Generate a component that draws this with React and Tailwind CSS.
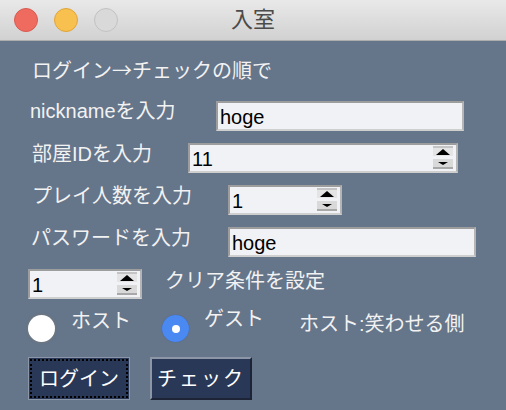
import React from "react";

const font = { fontFamily: '"Liberation Sans", "Noto Sans CJK JP", sans-serif' };
const cjk = { fontFamily: '"Noto Sans CJK JP", sans-serif' };

function Arrows() {
  return (
    <div className="absolute right-[3px] top-[1px] flex flex-col w-[20px]">
      <div className="h-[10px] bg-[#e4e4e4] border-t-2 border-[#c4c4c4] flex items-center justify-center">
        <svg width="14" height="6" viewBox="0 0 14 6"><polygon points="7,0 14,6 0,6" fill="#000" /></svg>
      </div>
      <div className="h-[3px]" />
      <div className="h-[10px] bg-[#d9d9d9] border-b-2 border-[#a8a8a8] flex items-center justify-center">
        <svg width="10" height="3" viewBox="0 0 10 3"><polygon points="0,0 10,0 5,3" fill="#000" /></svg>
      </div>
    </div>
  );
}

function Entry({ value, w, spin }) {
  return (
    <div
      className="relative h-[30px] shrink-0 bg-[#f1f2f6] border-2 border-t-[#9d9d9d] border-l-[#9d9d9d] border-r-[#b5b5b5] border-b-[#cfcfcf] flex items-center pl-[2px] text-[20px] text-black leading-none"
      style={{ width: w }}
    >
      <span className="pt-[1px]">{value}</span>
      {spin && <Arrows />}
    </div>
  );
}

function Label({ children, className = "" }) {
  return <div className={"text-[20px] leading-[24px] text-[#f2f2f2] whitespace-nowrap " + className}>{children}</div>;
}

export default function App() {
  return (
    <div className="w-[506px] h-[410px] bg-[#65758a] overflow-hidden" style={font}>
      {/* title bar */}
      <div className="relative h-[41px] bg-gradient-to-b from-[#e9e9e9] to-[#d1d1d1] border-b border-[#adadad] flex items-center justify-center">
        <div className="absolute left-[14px] top-[8px] flex gap-[16px]">
          <div className="w-[24px] h-[24px] rounded-full bg-[#ef6b60] border border-[#d85a50]" />
          <div className="w-[24px] h-[24px] rounded-full bg-[#f7c04f] border border-[#dfa63a]" />
          <div className="w-[24px] h-[24px] rounded-full bg-[#d9d9d9] border border-[#c2c2c2]" />
        </div>
        <div className="text-[22px] text-[#4b4b4b] leading-none">入室</div>
      </div>

      {/* line 1 */}
      <div className="mt-[17px] pl-[32px]">
        <Label>
          ログイン<span style={cjk}>→</span>チェックの順で
        </Label>
      </div>

      {/* nickname */}
      <div className="mt-[18px] flex items-start pl-[30px]">
        <Label className="w-[186px] -mt-[2px]">nicknameを入力</Label>
        <Entry value="hoge" w={248} />
      </div>

      {/* room id */}
      <div className="mt-[12px] flex items-start pl-[32px]">
        <Label className="w-[156px] -mt-[1px]">部屋IDを入力</Label>
        <Entry value="11" w={270} spin />
      </div>

      {/* players */}
      <div className="mt-[12px] flex items-start pl-[32px]">
        <Label className="w-[196px] -mt-[1px]">プレイ人数を入力</Label>
        <Entry value="1" w={114} spin />
      </div>

      {/* password */}
      <div className="mt-[12px] flex items-start pl-[31px]">
        <Label className="w-[197px] -mt-[1px]">パスワードを入力</Label>
        <Entry value="hoge" w={248} />
      </div>

      {/* clear condition */}
      <div className="mt-[12px] flex items-start pl-[28px]">
        <Entry value="1" w={114} spin />
        <Label className="ml-[23px]">クリア条件を設定</Label>
      </div>

      {/* radios */}
      <div className="mt-[8px] h-[42px] flex items-start pl-[28px]">
        <div className="mt-[8px] w-[27px] h-[27px] rounded-full bg-white shadow-[0_0_2px_1px_rgba(120,120,120,0.6)]" />
        <Label className="ml-[16px] mt-[2px]">ホスト</Label>
        <div className="ml-[31px] mt-[8px] w-[27px] h-[27px] rounded-full bg-[#4a88f2] flex items-center justify-center shadow-[0_0_1px_0_rgba(40,80,160,0.6)]">
          <div className="w-[8px] h-[8px] rounded-full bg-white" />
        </div>
        <Label className="ml-[15px]">ゲスト</Label>
        <Label className="ml-[35px] mt-[5px]">ホスト:笑わせる側</Label>
      </div>

      {/* buttons */}
      <div className="mt-[8px] flex pl-[28px] gap-[20px]">
        <div className="w-[102px] h-[43px] border border-[#8a96a8] bg-[#2a3857] p-[1px]">
          <div className="w-full h-full border-2 border-dotted border-black flex items-center justify-center text-[20px] text-white leading-none">
            ログイン
          </div>
        </div>
        <div className="w-[102px] h-[43px] border-2 border-t-[#8c96a6] border-l-[#8c96a6] border-b-[#1c2436] border-r-[#1c2436] bg-[#2a3857] flex items-center justify-center text-[20px] text-white leading-none tracking-[2px]">
          チェック
        </div>
      </div>
    </div>
  );
}
